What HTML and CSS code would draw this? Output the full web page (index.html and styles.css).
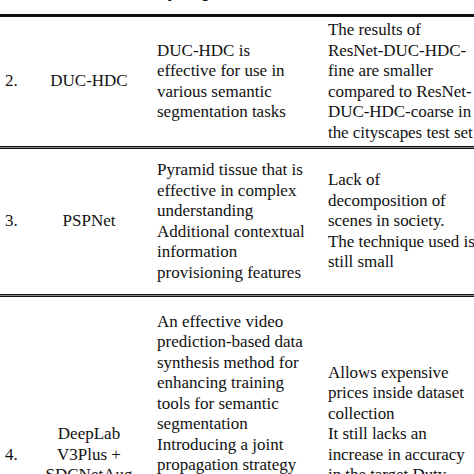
FILE: index.html
```html
<!DOCTYPE html>
<html lang="en">
<head>
<meta charset="utf-8">
<title>Summary table</title>
<link rel="stylesheet" href="styles.css">
</head>
<body>
<div class="page">
  <div class="caption">Summary of previous research</div>
  <div class="rule rule-top"></div>
  <div class="row row-2">
    <div class="cell c-no">2.</div>
    <div class="cell c-name">DUC-HDC</div>
    <div class="cell c-adv">DUC-HDC is<br>effective for use in<br>various semantic<br>segmentation tasks</div>
    <div class="cell c-dis">The results of<br>ResNet-DUC-HDC-<br>fine are smaller<br>compared to ResNet-<br>DUC-HDC-coarse in<br>the cityscapes test set</div>
  </div>
  <div class="rule rule-double"></div>
  <div class="row row-3">
    <div class="cell c-no">3.</div>
    <div class="cell c-name">PSPNet</div>
    <div class="cell c-adv">Pyramid tissue that is<br>effective in complex<br>understanding<br>Additional contextual<br>information<br>provisioning features</div>
    <div class="cell c-dis">Lack of<br>decomposition of<br>scenes in society.<br>The technique used is<br>still small</div>
  </div>
  <div class="rule rule-double"></div>
  <div class="row row-4">
    <div class="cell c-no">4.</div>
    <div class="cell c-name">DeepLab<br>V3Plus +<br>SDCNetAug</div>
    <div class="cell c-adv">An effective video<br>prediction-based data<br>synthesis method for<br>enhancing training<br>tools for semantic<br>segmentation<br>Introducing a joint<br>propagation strategy<br>to reduce misalignment<br>in synthesized samples<br>Boundary label<br>relaxation technique<br>for handling noisy<br>labels at boundaries</div>
    <div class="cell c-dis">Allows expensive<br>prices inside dataset<br>collection<br>It still lacks an<br>increase in accuracy<br>in the target Duty<br>of segmentation<br>of small and thin<br>objects</div>
  </div>
</div>
</body>
</html>
```

FILE: styles.css
```css
html, body {
  margin: 0;
  padding: 0;
  background: #ffffff;
  overflow: hidden;
}

.page {
  display: flow-root;
  overflow: hidden;
  width: 474px;
  height: 474px;
  font-family: "Liberation Serif", "Times New Roman", serif;
  font-size: 17px;
  line-height: 20.5px;
  color: #111111;
}

.caption {
  margin-top: -19px;
  height: 20px;
  line-height: 20px;
  padding-left: 97px;
  font-size: 19px;
  font-weight: bold;
  white-space: nowrap;
}

.rule {
  width: 100%;
}

.rule-top {
  margin-top: 13px;
  height: 3px;
  background: #111111;
}

.rule-double {
  height: 1px;
  border-top: 1px solid #111111;
  border-bottom: 1px solid #111111;
  background: #8a8a8a;
}

.row {
  display: grid;
  grid-template-columns: 40px 98px 182px minmax(0, 1fr);
  align-items: center;
}

.row-2 { height: 129px; }
.row-3 { height: 145px; }
.row-4 { height: 316px; }

.cell {
  white-space: nowrap;
}

.c-no {
  padding-left: 5px;
}

.c-name {
  text-align: center;
}

.c-adv {
  padding-left: 19px;
}

.c-dis {
  padding-left: 8px;
  letter-spacing: -0.05px;
}
```
